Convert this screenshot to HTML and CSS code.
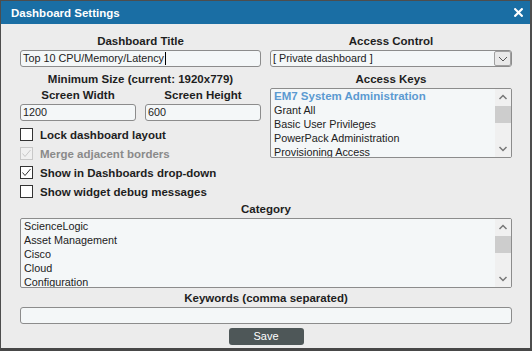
FILE: index.html
```html
<!DOCTYPE html>
<html>
<head>
<meta charset="utf-8">
<link rel="stylesheet" href="styles.css">
</head>
<body>
<div class="dialog">
  <div class="titlebar">
    <span class="title">Dashboard Settings</span>
    <svg class="close" width="9" height="9" viewBox="0 0 9 9"><path d="M1.2 1.2 L7.8 7.8 M7.8 1.2 L1.2 7.8" stroke="#fff" stroke-width="2.2" stroke-linecap="square"/></svg>
  </div>
  <div class="content">
    <div class="top">
      <div class="col">
        <div class="label">Dashboard Title</div>
        <div class="field"><span>Top 10 CPU/Memory/Latency</span><span class="caret"></span></div>
        <div class="label label-min">Minimum Size (current: 1920x779)</div>
        <div class="pair">
          <div class="sub">
            <div class="label">Screen Width</div>
            <div class="field">1200</div>
          </div>
          <div class="sub">
            <div class="label">Screen Height</div>
            <div class="field">600</div>
          </div>
        </div>
        <div class="checks">
          <div class="check"><span class="box"></span><span>Lock dashboard layout</span></div>
          <div class="check disabled"><span class="box"><svg width="13" height="13" viewBox="0 0 13 13"><path d="M2.5 6.5 L5 9.5 L10.5 3" fill="none" stroke="#c8c8c8" stroke-width="1"/></svg></span><span>Merge adjacent borders</span></div>
          <div class="check"><span class="box"><svg width="13" height="13" viewBox="0 0 13 13"><path d="M2.5 6.5 L5 9.5 L10.5 3" fill="none" stroke="#333" stroke-width="1"/></svg></span><span>Show in Dashboards drop-down</span></div>
          <div class="check"><span class="box"></span><span>Show widget debug messages</span></div>
        </div>
      </div>
      <div class="col">
        <div class="label">Access Control</div>
        <div class="field select">
          <span>[ Private dashboard ]</span>
          <span class="drop"><svg width="10" height="6" viewBox="0 0 10 6"><path d="M1 1 L5 5 L9 1" fill="none" stroke="#555" stroke-width="1"/></svg></span>
        </div>
        <div class="label label-keys">Access Keys</div>
        <div class="list keys">
          <div class="items">
            <div class="item sel">EM7 System Administration</div>
            <div class="item">Grant All</div>
            <div class="item">Basic User Privileges</div>
            <div class="item">PowerPack Administration</div>
            <div class="item">Provisioning Access</div>
          </div>
          <div class="scroll">
            <svg class="arr" width="10" height="6" viewBox="0 0 10 6"><path d="M1.5 5 L5 1.5 L8.5 5" fill="none" stroke="#777" stroke-width="1.5"/></svg>
            <div class="thumb"></div>
            <div class="spacer"></div>
            <svg class="arr" width="10" height="6" viewBox="0 0 10 6"><path d="M1.5 1 L5 4.5 L8.5 1" fill="none" stroke="#777" stroke-width="1.5"/></svg>
          </div>
        </div>
      </div>
    </div>
    <div class="label label-cat">Category</div>
    <div class="list cat">
      <div class="items">
        <div class="item">ScienceLogic</div>
        <div class="item">Asset Management</div>
        <div class="item">Cisco</div>
        <div class="item">Cloud</div>
        <div class="item">Configuration</div>
      </div>
      <div class="scroll">
        <svg class="arr" width="10" height="6" viewBox="0 0 10 6"><path d="M1.5 5 L5 1.5 L8.5 5" fill="none" stroke="#777" stroke-width="1.5"/></svg>
        <div class="thumb"></div>
        <div class="spacer"></div>
        <svg class="arr" width="10" height="6" viewBox="0 0 10 6"><path d="M1.5 1 L5 4.5 L8.5 1" fill="none" stroke="#777" stroke-width="1.5"/></svg>
      </div>
    </div>
    <div class="label label-kw">Keywords (comma separated)</div>
    <div class="field"></div>
    <div class="actions"><button class="save">Save</button></div>
  </div>
</div>
</body>
</html>
```
FILE: styles.css
```css
* { box-sizing: border-box; }
html, body { margin: 0; padding: 0; background: #4a4a4a; }
body { font-family: "Liberation Sans", Arial, sans-serif; font-size: 10.8px; color: #222; }
.dialog {
  width: 532px; height: 351px;
  border-top: 1px solid #4d4d4d;
  border-left: 1px solid #4d4d4d;
  border-right: 2px solid #4d4d4d;
  border-bottom: 3px solid #474747;
  background: #ececec;
  display: flex; flex-direction: column;
}
.titlebar {
  height: 23px; background: #1a6ea4; color: #fff;
  display: flex; align-items: center; justify-content: space-between;
  padding: 0 7px 0 10px;
}
.title { font-weight: bold; font-size: 11.5px; }
.close { display: block; }
.content { padding: 10px 18px 0 19px; display: flex; flex-direction: column; }
.top { display: grid; grid-template-columns: 241px 242px; column-gap: 9px; }
.col { display: flex; flex-direction: column; }
.label { font-weight: bold; font-size: 11.5px; text-align: center; line-height: 14px; height: 14px; color: #1e1e1e; }
.field {
  height: 17px; border: 1px solid #8c8c8c; border-radius: 3px;
  background: #f4f7f8; margin-top: 2px;
  padding: 0 2px; line-height: 15px; color: #222;
  display: flex; align-items: center;
}
.caret { width: 1px; height: 13px; background: #000; margin-left: 1px; }
.label-min { margin-top: 5px; }
.pair { display: grid; grid-template-columns: 116px 116px; column-gap: 9px; margin-top: 2px; }
.sub { display: flex; flex-direction: column; }
.checks { display: flex; flex-direction: column; margin-top: 7px; gap: 6px; }
.check { display: flex; align-items: center; height: 13px; font-weight: bold; font-size: 11.5px; color: #1e1e1e; }
.box {
  width: 13px; height: 13px; border: 1px solid #333; background: #fff;
  margin-right: 7px; flex: none; position: relative;
}
.box svg { position: absolute; left: -1px; top: -1px; }
.check.disabled { color: #8a8a8a; }
.check.disabled .box { border-color: #c8c8c8; background: #f0f0f0; }
.select { padding-right: 0; justify-content: space-between; }
.drop {
  width: 17px; height: 15px; border: 1px solid #a0a0a0; border-radius: 2px;
  background: #e9e9e9; display: flex; align-items: center; justify-content: center;
}
.label-keys { margin-top: 5px; }
.list {
  border: 1px solid #8c8c8c; border-radius: 2px; background: #f4f7f8;
  display: flex; overflow: hidden; height: 70px; margin-top: 2px;
}
.items { flex: 1; padding-left: 3px; overflow: hidden; }
.item { line-height: 14px; height: 14px; white-space: nowrap; color: #222; }
.item.sel { color: #5b9ad1; font-weight: bold; font-size: 11.5px; }
.scroll {
  width: 16px; background: #f0f0f0; display: flex; flex-direction: column; align-items: center;
}
.arr { margin-top: 5px; margin-bottom: 6px; flex: none; }
.scroll .arr:last-child { margin-top: 0; margin-bottom: 5px; }
.thumb { width: 16px; height: 17px; background: #cdcdcd; }
.spacer { flex: 1; }
.label-cat { margin-top: 4px; }
.cat { height: 70px; }
.label-kw { margin-top: 3px; }
.actions { display: flex; justify-content: center; margin-top: 4px; }
.save {
  width: 75px; height: 17px; border: none; border-radius: 3px;
  background: #4e5758; color: #fff; font-family: "Liberation Sans", Arial, sans-serif;
  font-size: 11px; padding: 0; line-height: 17px;
}
```
